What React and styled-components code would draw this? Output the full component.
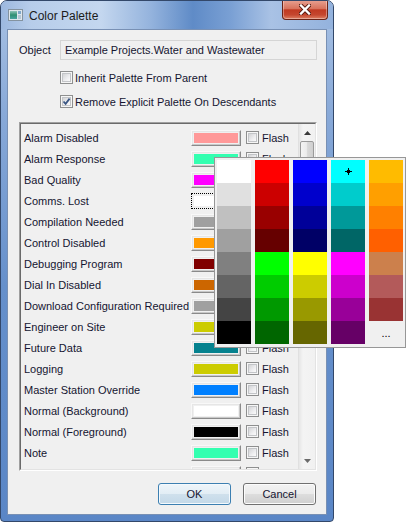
import React from 'react';
import styled, { createGlobalStyle } from 'styled-components';

const GlobalStyle = createGlobalStyle`
  html, body {
    margin: 0;
    padding: 0;
    background: #ffffff;
  }
  body {
    font-family: "Liberation Sans", Arial, sans-serif;
    font-size: 11px;
    color: #151530;
  }
`;

const Page = styled.div`
  position: relative;
  width: 406px;
  height: 523px;
  overflow: hidden;
`;

const Window = styled.div`
  width: 334px;
  height: 522px;
  box-sizing: border-box;
  border: 1px solid #33486a;
  border-radius: 7px 7px 4px 4px;
  background: linear-gradient(180deg, #a9c2e4 0%, #88a9d8 22%, #6690cb 55%, #5a86c6 100%);
  display: flex;
  flex-direction: column;
  overflow: hidden;
`;

const TitleBar = styled.div`
  height: 28px;
  flex: none;
  display: flex;
  align-items: center;
  padding: 0 5px 0 7px;
  background: linear-gradient(90deg, #9cb8df 0px, #b7cdea 30px, #c4d7ef 100px, #94b3dd 150px, #5f8bc7 192px, #7aa0d4 230px, #a9c2e5 270px, #93b2dd 333px);
`;

const TitleText = styled.span`
  font-family: "Liberation Sans", Arial, sans-serif;
  font-size: 12px;
  color: #1b1b1b;
  margin-left: 6px;
  margin-top: 2px;
`;

const CloseButton = styled.div`
  align-self: flex-start;
  margin-left: auto;
  margin-top: -1px;
  width: 46px;
  height: 20px;
  box-sizing: border-box;
  border: 1px solid #6a2317;
  border-top: none;
  border-radius: 0 0 4px 4px;
  background: linear-gradient(180deg, #e8a393 0%, #d8735d 45%, #c13a22 52%, #c5462e 78%, #de8063 100%);
  box-shadow: inset 0 0 0 1px rgba(255, 255, 255, 0.35);
  display: flex;
  align-items: center;
  justify-content: center;
`;

const Client = styled.div`
  flex: 1;
  margin: 0 6px 6px;
  box-sizing: border-box;
  border: 1px solid #7890b4;
  background: #f0f0f0;
  padding: 10px 9px 9px 11px;
  display: flex;
  flex-direction: column;
`;

const ObjectRow = styled.div`
  display: grid;
  grid-template-columns: 41px 1fr;
  align-items: center;
  height: 20px;
`;

const Field = styled.div`
  height: 20px;
  box-sizing: border-box;
  border: 1px solid #d5d5d5;
  padding-left: 4px;
  line-height: 18px;
  white-space: nowrap;
`;

const CheckRow = styled.label`
  display: flex;
  align-items: center;
  gap: 2px;
  height: 13px;
  margin: 11px 0 0 41px;
`;

const Box = styled.span`
  position: relative;
  flex: none;
  width: 13px;
  height: 13px;
  box-sizing: border-box;
  border: 1px solid #8e8f8f;
  background: #f6f6f6;
  &::before {
    content: '';
    position: absolute;
    inset: 1px;
    border: 1px solid #c3c5c8;
    background: linear-gradient(135deg, #d3d4d6 0%, #eeeef0 60%, #fbfbfb 100%);
  }
  svg {
    position: absolute;
    left: 0;
    top: 0;
  }
`;

const ListFrame = styled.div`
  margin-top: 14px;
  height: 349px;
  box-sizing: border-box;
  border: 1px solid;
  border-color: #a0a0a0 #ffffff #ffffff #a0a0a0;
`;

const ListInner = styled.div`
  height: 100%;
  box-sizing: border-box;
  border: 1px solid;
  border-color: #6a6a6a #e3e3e3 #e3e3e3 #6a6a6a;
  display: flex;
  overflow: hidden;
`;

const Rows = styled.div`
  flex: 1;
  padding: 3px 0 0 3px;
  overflow: hidden;
`;

const Row = styled.div`
  display: flex;
  align-items: center;
  height: 21px;
`;

const RowLabel = styled.span`
  width: 167px;
  flex: none;
  white-space: nowrap;
`;

const Swatch = styled.span`
  flex: none;
  width: 50px;
  height: 16px;
  box-sizing: border-box;
  margin-right: 5px;
  padding: 2px;
  border: 1px solid;
  border-color: ${p => (p.$focused ? '#000' : '#f8f8f8 #8a8a8a #8a8a8a #f8f8f8')};
  border-style: ${p => (p.$focused ? 'dotted' : 'solid')};
  box-shadow: ${p => (p.$focused ? 'none' : 'inset -1px -1px 0 #c8c8c8, inset 1px 1px 0 #e6e6e6')};
  background: #f0f0f0;
  &::before {
    content: '';
    display: block;
    height: 100%;
    background: ${p => p.$color};
  }
`;

const FlashText = styled.span`
  margin-left: 3px;
`;

const ScrollBar = styled.div`
  width: 17px;
  flex: none;
  box-sizing: border-box;
  border-left: 1px solid #e0e0e0;
  background: linear-gradient(90deg, #e6e6e6 0%, #f4f4f4 25%, #f1f1f1 100%);
  display: flex;
  flex-direction: column;
`;

const Arrow = styled.div`
  height: 17px;
  flex: none;
  display: flex;
  align-items: center;
  justify-content: center;
`;

const Thumb = styled.div`
  height: 40px;
  margin: 0 1px;
  box-sizing: border-box;
  border: 1px solid #9a9a9a;
  border-radius: 2px;
  background: linear-gradient(90deg, #f4f4f4 0%, #ececec 45%, #d9d9d9 55%, #cfcfcf 100%);
`;

const Track = styled.div`
  flex: 1;
`;

const ButtonRow = styled.div`
  display: flex;
  justify-content: flex-end;
  gap: 12px;
  margin-top: 12px;
  padding-right: 1px;
`;

const Button = styled.div`
  width: 73px;
  height: 22px;
  box-sizing: border-box;
  border: 1px solid ${p => (p.$default ? '#3c7fb1' : '#707070')};
  border-radius: 3px;
  background: ${p =>
    p.$default
      ? 'linear-gradient(180deg, #eef5fa 0%, #e2edf5 50%, #cfe0ec 52%, #c3d8e8 100%)'
      : 'linear-gradient(180deg, #f2f2f2 0%, #ebebeb 50%, #dddddd 52%, #cfcfcf 100%)'};
  box-shadow: inset 0 0 0 1px ${p => (p.$default ? '#f4f9fd' : '#fcfcfc')};
  display: flex;
  align-items: center;
  justify-content: center;
`;

const Popup = styled.div`
  position: absolute;
  left: 214px;
  top: 157px;
  width: 192px;
  height: 191px;
  box-sizing: border-box;
  border: 1px solid #979797;
  background: #f0f0f0;
  padding: 2px 2px 3px;
  display: grid;
  grid-template-columns: repeat(5, 34px);
  grid-template-rows: repeat(8, 23px);
  grid-auto-flow: column;
  column-gap: 4px;
`;

const Cell = styled.div`
  background: ${p => p.$color || 'transparent'};
  display: flex;
  align-items: center;
  justify-content: center;
  color: #000;
`;

const rows = [
  ['Alarm Disabled', '#ff9999'],
  ['Alarm Response', '#33ffb0'],
  ['Bad Quality', '#ff00ff'],
  ['Comms. Lost', '#ffffff', true],
  ['Compilation Needed', '#a0a0a0'],
  ['Control Disabled', '#ff9900'],
  ['Debugging Program', '#800000'],
  ['Dial In Disabled', '#cc6600'],
  ['Download Configuration Required', '#a0a0a0'],
  ['Engineer on Site', '#cccc00'],
  ['Future Data', '#06828f'],
  ['Logging', '#cccc00'],
  ['Master Station Override', '#0080ff'],
  ['Normal (Background)', '#ffffff'],
  ['Normal (Foreground)', '#000000'],
  ['Note', '#33ffb0'],
  ['Off Scan', '#e06a00'],
];

const palette = [
  '#ffffff', '#e0e0e0', '#c0c0c0', '#a0a0a0', '#808080', '#646464', '#444444', '#000000',
  '#ff0000', '#cc0000', '#990000', '#660000', '#00ff00', '#00cc00', '#009900', '#006600',
  '#0000ff', '#0000cc', '#000099', '#000066', '#ffff00', '#cccc00', '#999900', '#666600',
  '#00ffff', '#00cccc', '#009999', '#006666', '#ff00ff', '#cc00cc', '#990099', '#660066',
  '#ffbb00', '#ff9f00', '#ff8000', '#ff6000', '#cc804c', '#b35a5a', '#993333', null,
];

const CheckBox = ({ checked }) => (
  <Box>
    {checked && (
      <svg width="11" height="11" viewBox="0 0 11 11">
        <path d="M2.5 5.5 L4.6 7.8 L8.6 2.6" fill="none" stroke="#3a5683" strokeWidth="1.8" />
      </svg>
    )}
  </Box>
);

const AppIcon = () => (
  <svg width="15" height="12" viewBox="0 0 15 12">
    <defs>
      <linearGradient id="ig" x1="0" y1="0" x2="0" y2="1">
        <stop offset="0" stopColor="#8fc3b8" />
        <stop offset="0.5" stopColor="#2f8f72" />
        <stop offset="1" stopColor="#4aa3a0" />
      </linearGradient>
    </defs>
    <rect x="0.5" y="0.5" width="14" height="11" fill="#dfe6ec" stroke="#8493a0" />
    <rect x="2" y="2" width="7" height="8" fill="url(#ig)" />
    <rect x="10" y="2" width="3" height="3" fill="#7ea7c9" />
    <rect x="10" y="6" width="3" height="4" fill="#b6c7d6" />
  </svg>
);

const CloseGlyph = () => (
  <svg width="12" height="11" viewBox="0 0 12 11">
    <path d="M2 1.5 L10 9.5 M10 1.5 L2 9.5" stroke="#5a1c12" strokeWidth="4.2" strokeLinecap="square" />
    <path d="M2 1.5 L10 9.5 M10 1.5 L2 9.5" stroke="#ffffff" strokeWidth="2.4" strokeLinecap="square" />
  </svg>
);

const Marker = () => (
  <svg width="7" height="7" viewBox="0 0 7 7">
    <path d="M3 0h1v2h1v1h2v1h-2v1h-1v2h-1v-2h-1v-1h-2v-1h2v-1h1z" fill="#000" />
  </svg>
);

const UpArrow = () => (
  <svg width="7" height="4" viewBox="0 0 7 4">
    <path d="M0 4 L3.5 0 L7 4 Z" fill="#3a3a3a" />
  </svg>
);

const DownArrow = () => (
  <svg width="7" height="4" viewBox="0 0 7 4">
    <path d="M0 0 L7 0 L3.5 4 Z" fill="#6a6a6a" />
  </svg>
);

const App = () => {
  return (
    <Page>
      <GlobalStyle />
      <Window>
        <TitleBar>
          <AppIcon />
          <TitleText>Color Palette</TitleText>
          <CloseButton>
            <CloseGlyph />
          </CloseButton>
        </TitleBar>
        <Client>
          <ObjectRow>
            <span>Object</span>
            <Field>Example Projects.Water and Wastewater</Field>
          </ObjectRow>
          <CheckRow>
            <CheckBox />
            <span>Inherit Palette From Parent</span>
          </CheckRow>
          <CheckRow>
            <CheckBox checked />
            <span>Remove Explicit Palette On Descendants</span>
          </CheckRow>
          <ListFrame>
            <ListInner>
              <Rows>
                {rows.map(([name, color, focused]) => (
                  <Row key={name}>
                    <RowLabel>{name}</RowLabel>
                    <Swatch $color={color} $focused={focused} />
                    <CheckBox />
                    <FlashText>Flash</FlashText>
                  </Row>
                ))}
              </Rows>
              <ScrollBar>
                <Arrow>
                  <UpArrow />
                </Arrow>
                <Thumb />
                <Track />
                <Arrow>
                  <DownArrow />
                </Arrow>
              </ScrollBar>
            </ListInner>
          </ListFrame>
          <ButtonRow>
            <Button $default>OK</Button>
            <Button>Cancel</Button>
          </ButtonRow>
        </Client>
      </Window>
      <Popup>
        {palette.map((color, i) =>
          color ? (
            <Cell key={i} $color={color}>
              {i === 24 && <Marker />}
            </Cell>
          ) : (
            <Cell key={i}>...</Cell>
          )
        )}
      </Popup>
    </Page>
  );
};

export default App;
